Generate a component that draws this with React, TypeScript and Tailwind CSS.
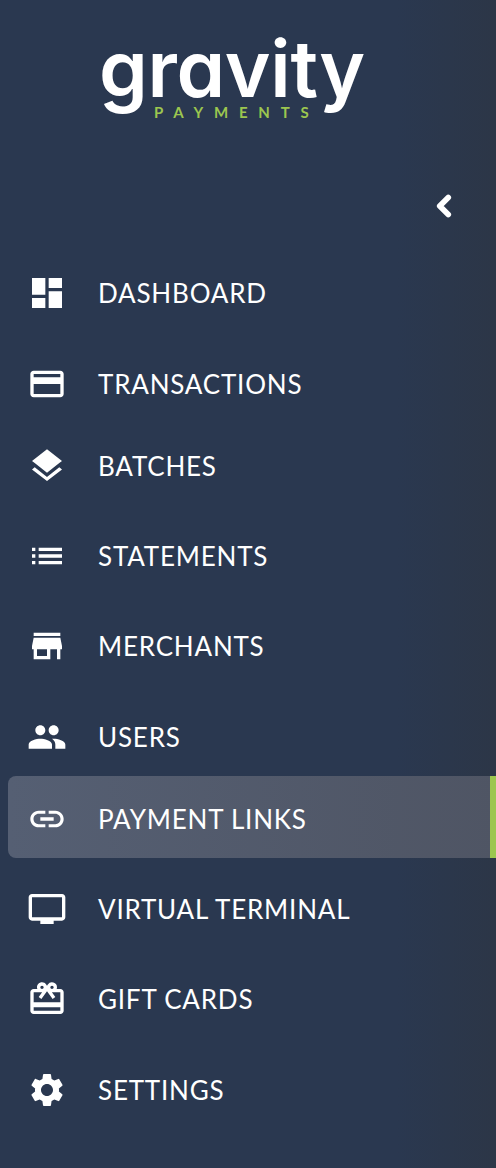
import React from 'react';
import { ChevronLeft } from 'lucide-react';
import {
  MdDashboard,
  MdOutlineCreditCard,
  MdLayers,
  MdList,
  MdStore,
  MdPeople,
  MdLink,
  MdOutlineTv,
  MdOutlineCardGiftcard,
  MdSettings,
} from 'react-icons/md';

const items = [
  { label: 'DASHBOARD', icon: MdDashboard, spacing: 'mt-0' },
  { label: 'TRANSACTIONS', icon: MdOutlineCreditCard, spacing: 'mt-[9px]' },
  { label: 'BATCHES', icon: MdLayers, spacing: 'mt-0' },
  { label: 'STATEMENTS', icon: MdList, spacing: 'mt-2' },
  { label: 'MERCHANTS', icon: MdStore, spacing: 'mt-2' },
  { label: 'USERS', icon: MdPeople, spacing: 'mt-[9px]' },
  { label: 'PAYMENT LINKS', icon: MdLink, spacing: '-mt-0.5 pt-1', active: true },
  { label: 'VIRTUAL TERMINAL', icon: MdOutlineTv, spacing: 'mt-2.5' },
  { label: 'GIFT CARDS', icon: MdOutlineCardGiftcard, spacing: 'mt-2' },
  { label: 'SETTINGS', icon: MdSettings, spacing: 'mt-[9px]' },
];

export default function App() {
  return (
    <div className="w-[496px] h-[1168px] overflow-hidden bg-gradient-to-r from-[#2a3850] from-80% to-[#2c3647] font-['Lato',sans-serif] text-white">
      {/* Logo */}
      <div className="h-[182px] pl-[99px] pt-[34px]">
        <div className="relative w-[270px]">
          <div className="font-['Inter',sans-serif] [font-feature-settings:'cv11'] text-[78px] leading-[70px] font-semibold tracking-[-0.3px]">
            gravity
          </div>
          <div className="absolute left-[55px] top-[70px] text-[15px] leading-[16px] font-bold tracking-[10.8px] text-[#9cc64f]">
            PAYMENTS
          </div>
        </div>
      </div>

      {/* Collapse */}
      <div className="flex justify-end pr-[35px] h-[48px] items-center">
        <ChevronLeft size={34} strokeWidth={4} />
      </div>

      {/* Nav */}
      <nav className="mt-[22px] flex flex-col">
        {items.map((item) => {
          const Icon = item.icon;
          return (
            <div
              key={item.label}
              className={`relative ml-2 h-[82px] flex items-center ${item.spacing} ${
                item.active ? 'rounded-l-lg bg-gradient-to-r from-[#555f73] to-[#4f5564]' : ''
              }`}
            >
              <div className="w-[90px] flex justify-center shrink-0 -ml-[6px]">
                <Icon size={40} />
              </div>
              <span className="ml-[6px] text-[26px] leading-none font-normal tracking-[0.8px]">{item.label}</span>
              {item.active && <div className="absolute right-0 top-0 bottom-0 w-[6px] bg-[#9cc64f]" />}
            </div>
          );
        })}
      </nav>
    </div>
  );
}
